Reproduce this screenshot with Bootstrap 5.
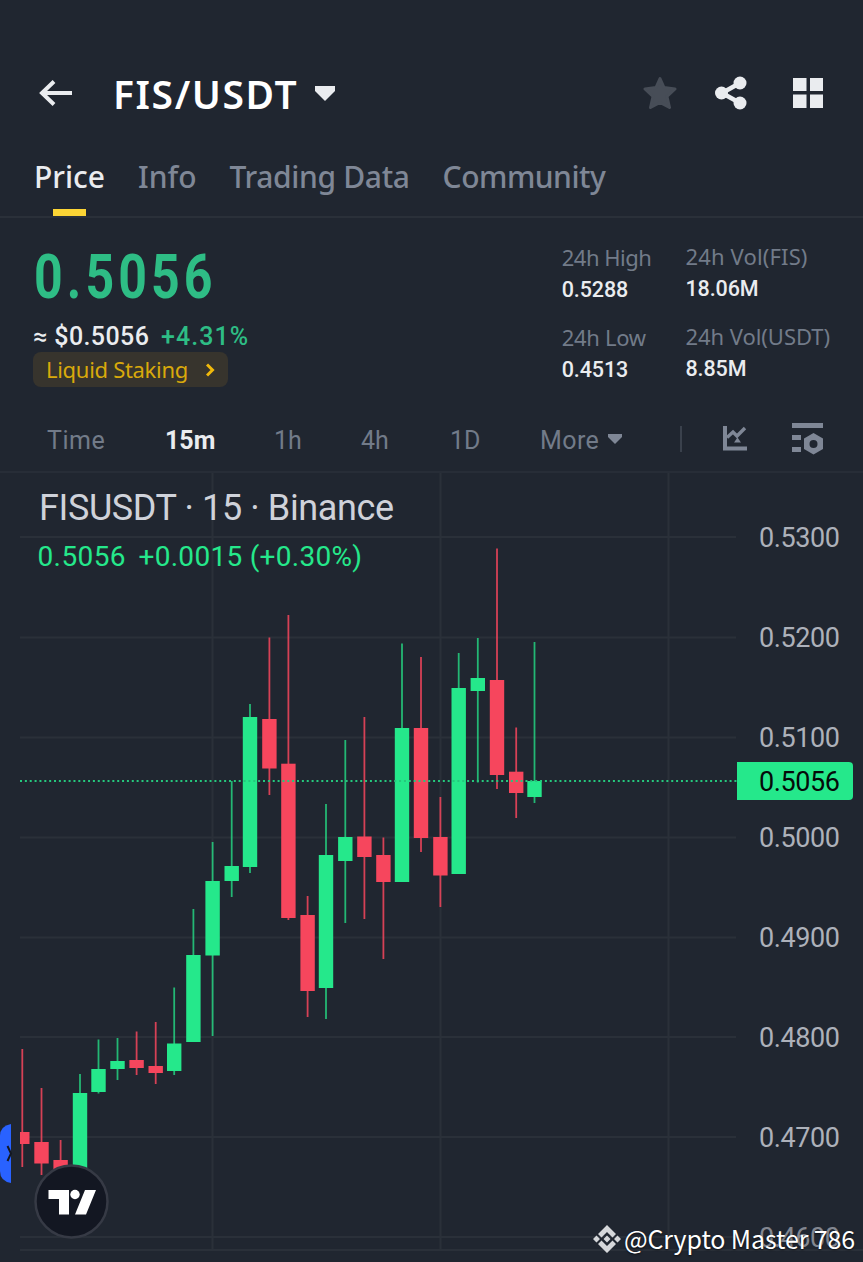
<!DOCTYPE html>
<html lang="en">
<head>
<meta charset="utf-8">
<meta name="viewport" content="width=device-width, initial-scale=1">
<title>FIS/USDT</title>
<link href="https://cdn.jsdelivr.net/npm/bootstrap@5.3.0/dist/css/bootstrap.min.css" rel="stylesheet">
<style>
body{background:#202630;color:#eaecef;font-family:"Noto Sans",sans-serif;margin:0;overflow:hidden;white-space:nowrap}
svg{display:block;flex:none}
.screen{width:863px;height:1262px;overflow:hidden}
.topbar{height:134px;padding:53px 39px 1px}
.pair{font-size:39px;font-weight:600;line-height:80px;color:#fff;margin-left:40px;letter-spacing:1.6px;padding-top:1px;height:80px}
.tabs{height:84px;border-bottom:2px solid #2a3039;padding:0 34px;font-size:30px;font-weight:500;color:#7f8796;gap:33px;line-height:86px}
.tab-on{color:#eaecef;position:relative}
.tab-on::after{content:"";position:absolute;left:19px;bottom:0;width:33px;height:7px;background:#fcd535}
.tight{letter-spacing:-.35px}
.stats{height:190px;padding:22px 33px 0 33px}
.last{font:700 61px/74px Roboto,sans-serif;color:#2ebd85}
.last span{display:inline-block;transform:scaleX(.82);transform-origin:0 50%;letter-spacing:5px;margin-left:1px}
.sub-price{font:500 25px/32px Roboto,sans-serif;margin-top:7px;letter-spacing:.4px}
.up{color:#2ebd85;letter-spacing:1.1px;margin-left:5px}
.tagchip{height:35px;width:195px;border-radius:8px;background:#37342d;color:#d9a90b;font-size:22px;line-height:35px;padding:0 13px 0 13px;letter-spacing:-.3px;margin-top:-1px}
.statcol{font-size:22px;line-height:30px;color:#727b89}
.statcol b{display:block;font:500 21.5px/30px Roboto,sans-serif;color:#eaecef;letter-spacing:-.1px;margin:3px 0 16.5px}
.frames{height:65px;border-bottom:2px solid #272d37;font:400 25px/62px Roboto,sans-serif;color:#727b89;padding:2px 0 0 47px}
.frames svg{margin-bottom:4px}
.chart{height:789px}
.chart text{font-family:Roboto,sans-serif}
.sign{right:8px;bottom:6px;font:400 25px/36px "Noto Sans CJK SC",sans-serif;color:#fff;text-shadow:0 1px 2px #000a}
</style>
</head>
<body>
<main class="screen position-relative">
<header class="topbar d-flex align-items-center">
  <svg width="34" height="26" viewBox="0 0 34 26" fill="none" stroke="#eaecef" stroke-width="4"><path d="M2.500 13H33M15 1.500L3 13L15 24.500"/></svg>
  <div class="pair">FIS/USDT</div>
  <svg class="ms-3" width="22" height="17" viewBox="0 0 22 17" fill="#eaecef"><path d="M1 1H21V6L11 16L1 6Z"/></svg>
  <svg class="ms-auto" width="34" height="34" viewBox="0 0 34 34" fill="#474d57" stroke="#474d57" stroke-width="3" stroke-linejoin="round"><path d="M17 2.500L21 11.500L32 13L24 20.500L26.500 31.500L17 26.500L7.500 31.500L10 20.500L2 13L13 11.500Z"/></svg>
  <svg style="margin-left:38px" width="32" height="34" viewBox="0 0 32 34" fill="#eaecef"><path d="M7 17L25 7M7 17L25 27" stroke="#eaecef" stroke-width="4.500"/><circle cx="6.500" cy="17" r="6.500"/><circle cx="25" cy="7" r="6.500"/><circle cx="25" cy="27" r="6.500"/></svg>
  <svg style="margin-left:46px" width="31" height="30" viewBox="0 0 31 30" fill="#eaecef"><path d="M0 0H13.500V13H0ZM17 0H30V13H17ZM0 16.500H13.500V30H0ZM17 16.500H30V30H17Z"/></svg>
</header>
<nav class="tabs d-flex"><span class="tab-on">Price</span><span>Info</span><span class="tight">Trading Data</span><span style="letter-spacing:-.5px">Community</span></nav>
<section class="stats d-flex">
  <div style="width:529px">
    <div class="last"><span>0.5056</span></div>
    <div class="sub-price">≈ $0.5056 <span class="up">+4.31%</span></div>
    <div class="tagchip d-flex justify-content-between align-items-center"><span>Liquid Staking</span><svg width="9" height="14" viewBox="0 0 9 14" fill="none" stroke="#f0b90b" stroke-width="3"><path d="M1 1.500L6.500 7L1 12.500"/></svg></div>
  </div>
  <div class="statcol" style="width:124px;padding:2px 0 0 1px"><span style="letter-spacing:-.5px">24h High</span><b>0.5288</b><span style="letter-spacing:-.3px">24h Low</span><b>0.4513</b></div>
  <div class="statcol" style="padding:1px 0 0 1px"><span style="letter-spacing:.15px">24h Vol(FIS)</span><b>18.06M</b><span style="letter-spacing:-.05px">24h Vol(USDT)</span><b>8.85M</b></div>
</section>
<nav class="frames d-flex align-items-center">
  <span style="width:118px;letter-spacing:.5px">Time</span><span class="fw-bold" style="width:109px;color:#eaecef">15m</span><span style="width:87px">1h</span><span style="width:89px">4h</span><span style="width:90px">1D</span><span style="letter-spacing:.4px">More</span>
  <svg class="ms-2" width="16" height="12" viewBox="0 0 16 12" fill="#7f8796"><path d="M1 1H15V4L8 11L1 4Z"/></svg>
  <svg style="margin-left:57px" width="2" height="26"><path d="M1 0V26" stroke="#3a414c" stroke-width="2"/></svg>
  <svg style="margin-left:41px" width="25" height="25" viewBox="0 0 25 25" fill="none" stroke="#7f8796" stroke-width="4"><path d="M2 0V22.500H24"/><path d="M4 11.500L10 6L14 10L22 2" stroke-width="3.400"/><path d="M14.500 11.500L18 16.500H11Z" fill="#7f8796" stroke="none"/></svg>
  <svg style="margin-left:44px" width="32" height="33" viewBox="0 0 32 33" fill="#7f8796"><path d="M0 1H31V6H0ZM0 13H9V18H0ZM0 25H9V30H0Z"/><path fill-rule="evenodd" d="M21.500 11L31 16.500V27L21.500 32.500L12 27V16.500ZM21.500 18A4 4 0 1 0 21.500 26A4 4 0 1 0 21.500 18Z"/></svg>
</nav>
<section class="chart">
<svg width="863" height="789" viewBox="0 473 863 789">
  <path stroke="#2a3039" stroke-width="2" d="M20 537H736M20 637.500H736M20 737.500H736M20 837.500H736M20 937.500H736M20 1037H736M20 1137H736M20 1237H736M20 1250H863M212.500 473V1250M440.500 473V1250M668.500 473V1250"/>
  <g id="candles"></g>
  <path d="M20 781H737" stroke="#25c87d" stroke-width="1.900" stroke-dasharray="2 2.860"/>
  <g font-size="27" fill="#adb1ba" id="axis"></g>
  <path d="M737 762H849Q853 762 853 766V796Q853 800 849 800H737Z" fill="#25e88b"/>
  <text x="759" y="791" font-size="27" textLength="81" fill="#050b0a">0.5056</text>
  <text x="39" y="520" font-size="36" textLength="355" fill="#cfd2da">FISUSDT · 15 · Binance</text>
  <text x="37.500" y="565.500" font-size="28" textLength="88" fill="#25e88b">0.5056</text>
  <text x="138.500" y="565.500" font-size="28" textLength="223.500" fill="#25e88b">+0.0015 (+0.30%)</text>
  <path d="M11 1124Q0 1126 0 1136V1171Q0 1181 11 1183Z" fill="#2962ff"/>
  <path d="M7.500 1146L11 1153.500L7.500 1161" fill="none" stroke="#131722" stroke-width="2"/>
  <circle cx="71.500" cy="1201.500" r="36" fill="#131722" stroke="#363a45" stroke-width="2.500"/>
  <path d="M48.500 1190H69V1214.500H59V1199H48.500ZM85 1190H96L86 1214.500H75Z" fill="#fff"/><circle cx="75" cy="1194.500" r="4.700" fill="#fff"/>
</svg>
</section>
<div class="sign position-absolute d-flex align-items-center">
  <svg width="28" height="28" viewBox="0 0 28 28" fill="#d5d7da"><path d="M14 0L23 9L19.500 12.500L14 7L8.500 12.500L5 9ZM14 28L23 19L19.500 15.500L14 21L8.500 15.500L5 19ZM14 10.500L17.500 14L14 17.500L10.500 14ZM3.500 10.500L7 14L3.500 17.500L0 14ZM24.500 10.500L28 14L24.500 17.500L21 14Z"/></svg>
  <span style="margin:-2px 0 0 3px;letter-spacing:-.12px">@Crypto Master 786</span>
</div>
</main>
<script>
// centre x, body top, body bottom, high, low, rising
const rows=[[22.3,1132,1144,1049,1167,0],[41.5,1142,1163.5,1088,1175,0],[60.6,1160,1176,1140,1176,0],[80,1093,1176,1074,1176,1],[98.5,1069,1092,1039.5,1093.5,1],[117.5,1061,1069,1038,1080,1],[136.6,1060,1068,1031.5,1075,0],[155.7,1066,1073,1022,1084,0],[174.2,1043.5,1071,987.5,1075,1],[193.4,955,1042,909,1042,1],[212.6,881,955.5,842,1036,1],[231.7,866,881,781,897,1],[250,717,867,704,873,1],[269.4,719,768.5,637.5,795,0],[288.4,763.7,918,615,920,0],[307.6,915,991,896,1017,0],[326,855,988,804,1019,1],[345.3,837,861,740,923,1],[364.4,836.5,857,717,919,0],[383.4,855,882,837.5,959,0],[402,728,882,643.5,882,1],[421,728,838,657,852,0],[440.4,837,875.5,797,907,0],[458.7,688,874,653,874,1],[477.8,678,691,638,782.5,1],[497,680,775,548.5,789,0],[516.2,771.7,793,727.5,818,0],[534.5,781,797,642,803,1]];
document.getElementById('candles').innerHTML=rows.map(([x,t,b,h,l,u])=>{
  const c=u?'#25e88b':'#f6465d',left=Math.max(20,x-7.2);
  return `<path d="M${x} ${h}V${l}" stroke="${c}" stroke-width="1.8" opacity="${u?.75:.85}"/><rect x="${left}" y="${t}" width="${x+7.2-left}" height="${b-t}" fill="${c}"/>`}).join('');
document.getElementById('axis').innerHTML=['0.5300','0.5200','0.5100','0.5000','0.4900','0.4800','0.4700','0.4600'].map((v,i)=>`<text x="759" y="${547.4+i*100}" textLength="81" ${i==7?'opacity=".7"':''}>${v}</text>`).join('');
</script>
<script src="https://cdn.jsdelivr.net/npm/bootstrap@5.3.0/dist/js/bootstrap.bundle.min.js"></script>
</body>
</html>
